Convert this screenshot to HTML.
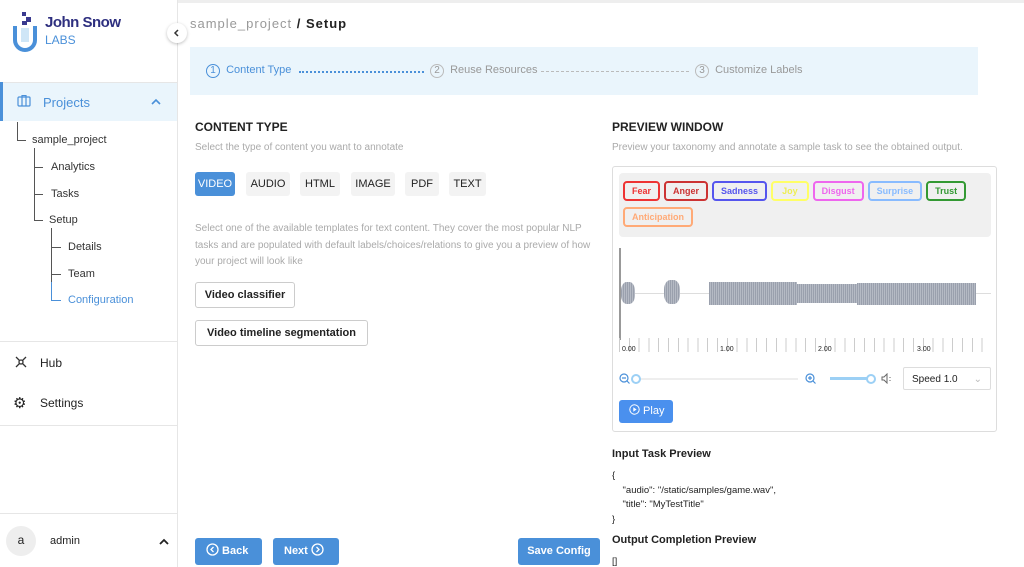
<!DOCTYPE html><html><head><style>
*{margin:0;padding:0;box-sizing:border-box}
body{width:1024px;height:567px;overflow:hidden;font-family:"Liberation Sans",sans-serif;background:#fff;position:relative;color:#222}
.a{position:absolute}
.sb{left:0;top:0;width:178px;height:567px;border-right:1px solid #e6e6e6;background:#fff}
.tree{font-size:11px;color:#333}
.btn{position:absolute;font-size:11px;border-radius:3px}
.tag{display:inline-block;border:2px solid;border-radius:4px;font-size:9px;font-weight:bold;padding:3px 7px;margin:0 4px 6px 0}
.ln{position:absolute;background:#555}
.wv{position:absolute;background:repeating-linear-gradient(90deg,#9aa0ad 0 1px,#b5bac4 1px 2px)}
</style></head><body>
<div class="a" style="left:0;top:0;width:1024px;height:3px;background:#eee"></div>
<div class="a sb">
 <svg class="a" style="left:12px;top:12px" width="30" height="40"><path d="M3 14 v14 a10 10 0 0 0 20 0 v-14" stroke="#4a90d9" stroke-width="4" fill="none"/><rect x="9" y="16" width="8" height="14" fill="#cfe6f7"/><rect x="10" y="0" width="4" height="4" fill="#3a3a8f"/><rect x="14" y="5" width="5" height="5" fill="#3a3a8f"/><rect x="10" y="9" width="5" height="4" fill="#3a3a8f"/></svg>
 <div class="a" style="left:45px;top:14px;font-size:15px;font-weight:bold;color:#2e2f7f;letter-spacing:-0.5px">John Snow</div>
 <div class="a" style="left:45px;top:33px;font-size:12px;color:#4a90d9">LABS</div>
 <div class="a" style="left:0;top:82px;width:177px;height:39px;background:#eaf5fc;border-top:1px solid #e6e6e6"></div>
 <div class="a" style="left:0;top:82px;width:3px;height:39px;background:#4a90d9"></div>
 <svg class="a" style="left:17px;top:95px" width="14" height="12"><rect x="1" y="2" width="12" height="9" rx="1" stroke="#4a90d9" fill="none" stroke-width="1.2"/><path d="M5 2V0.5h4V2M5 2v9M9 2v9" stroke="#4a90d9" fill="none" stroke-width="1.2"/></svg>
 <div class="a" style="left:43px;top:95px;font-size:13px;color:#4a90d9">Projects</div>
 <svg class="a" style="left:151px;top:98px" width="10" height="7"><path d="M1 6L5 2L9 6" stroke="#4a90d9" stroke-width="1.6" fill="none"/></svg>
 <div class="ln" style="left:17px;top:122px;width:1px;height:18px"></div><div class="ln" style="left:17px;top:140px;width:9px;height:1px"></div>
 <div class="a tree" style="left:32px;top:134px">sample_project</div>
 <div class="ln" style="left:34px;top:148px;width:1px;height:72px"></div>
 <div class="a tree" style="left:51px;top:161px">Analytics</div><div class="ln" style="left:34px;top:167px;width:9px;height:1px"></div>
 <div class="a tree" style="left:51px;top:188px">Tasks</div><div class="ln" style="left:34px;top:194px;width:9px;height:1px"></div>
 <div class="a tree" style="left:49px;top:214px">Setup</div><div class="ln" style="left:34px;top:220px;width:9px;height:1px"></div>
 <div class="ln" style="left:51px;top:228px;width:1px;height:54px"></div>
 <div class="ln" style="left:51px;top:282px;width:1px;height:18px;background:#4a90d9"></div>
 <div class="a tree" style="left:68px;top:241px">Details</div><div class="ln" style="left:51px;top:247px;width:10px;height:1px"></div>
 <div class="a tree" style="left:68px;top:268px">Team</div><div class="ln" style="left:51px;top:274px;width:10px;height:1px"></div>
 <div class="a tree" style="left:68px;top:294px;color:#4a90d9">Configuration</div><div class="ln" style="left:51px;top:300px;width:10px;height:1px;background:#4a90d9"></div>
 <div class="a" style="left:0;top:341px;width:177px;border-top:1px solid #e6e6e6"></div>
 <svg class="a" style="left:14px;top:355px" width="14" height="14"><g stroke="#333" stroke-width="1.3" fill="none"><circle cx="7" cy="7" r="2"/><path d="M2 2L5.5 5.5M12 2L8.5 5.5M2 12L5.5 8.5M12 12L8.5 8.5"/></g></svg>
 <div class="a" style="left:40px;top:356px;font-size:12px">Hub</div>
 <div class="a" style="left:13px;top:394px;font-size:15px">&#9881;</div><div class="a" style="left:40px;top:396px;font-size:12px">Settings</div>
 <div class="a" style="left:0;top:425px;width:177px;border-top:1px solid #e6e6e6"></div>
 <div class="a" style="left:0;top:513px;width:177px;border-top:1px solid #e6e6e6"></div>
 <div class="a" style="left:6px;top:526px;width:30px;height:30px;border-radius:50%;background:#eee;text-align:center;line-height:29px;font-size:12px">a</div>
 <div class="a" style="left:50px;top:535px;font-size:11px">admin</div>
 <svg class="a" style="left:159px;top:538px" width="10" height="7"><path d="M1 6L5 2L9 6" stroke="#222" stroke-width="1.8" fill="none"/></svg>
</div>
<div class="a" style="left:167px;top:23px;width:20px;height:20px;border-radius:50%;background:#fff;box-shadow:0 1px 3px rgba(0,0,0,.25)"><svg width="20" height="20"><path d="M11 7L8 10L11 13" stroke="#333" stroke-width="1.5" fill="none"/></svg></div>
<div class="a" style="left:190px;top:16px;font-size:13px;letter-spacing:1px;color:#999">sample_project<b style="color:#222"> / Setup</b></div>
<div class="a" style="left:190px;top:47px;width:788px;height:48px;background:#eaf5fc"></div>
<div class="a" style="left:206px;top:64px;font-size:11px;color:#4a90d9"><span style="display:inline-block;width:14px;height:14px;border:1px solid #4a90d9;border-radius:50%;text-align:center;line-height:12px;font-size:10px">1</span>&nbsp; Content Type</div>
<div class="a" style="left:299px;top:71px;width:125px;border-top:2px dotted #4a90d9"></div>
<div class="a" style="left:430px;top:64px;font-size:11px;color:#999"><span style="display:inline-block;width:14px;height:14px;border:1px solid #bbb;border-radius:50%;text-align:center;line-height:12px;font-size:10px">2</span>&nbsp; Reuse Resources</div>
<div class="a" style="left:541px;top:71px;width:148px;border-top:1px dashed #bbb"></div>
<div class="a" style="left:695px;top:64px;font-size:11px;color:#999"><span style="display:inline-block;width:14px;height:14px;border:1px solid #bbb;border-radius:50%;text-align:center;line-height:12px;font-size:10px">3</span>&nbsp; Customize Labels</div>
<div class="a" style="left:195px;top:120px;font-size:12px;font-weight:bold">CONTENT TYPE</div>
<div class="a" style="left:195px;top:142px;font-size:10px;color:#aaa">Select the type of content you want to annotate</div>
<div class="btn" style="left:195px;top:172px;width:40px;height:24px;background:#4a90d9;color:#fff;text-align:center;line-height:24px">VIDEO</div>
<div class="btn" style="left:246px;top:172px;width:44px;height:24px;background:#f3f3f3;text-align:center;line-height:24px">AUDIO</div>
<div class="btn" style="left:300px;top:172px;width:40px;height:24px;background:#f3f3f3;text-align:center;line-height:24px">HTML</div>
<div class="btn" style="left:351px;top:172px;width:44px;height:24px;background:#f3f3f3;text-align:center;line-height:24px">IMAGE</div>
<div class="btn" style="left:405px;top:172px;width:34px;height:24px;background:#f3f3f3;text-align:center;line-height:24px">PDF</div>
<div class="btn" style="left:449px;top:172px;width:37px;height:24px;background:#f3f3f3;text-align:center;line-height:24px">TEXT</div>
<div class="a" style="left:195px;top:221px;width:410px;font-size:10px;color:#aaa;line-height:16.5px">Select one of the available templates for text content. They cover the most popular NLP tasks and are populated with default labels/choices/relations to give you a preview of how your project will look like</div>
<div class="btn" style="left:195px;top:282px;width:100px;height:26px;border:1px solid #ccc;font-weight:bold;text-align:center;line-height:24px">Video classifier</div>
<div class="btn" style="left:195px;top:320px;width:173px;height:26px;border:1px solid #ccc;font-weight:bold;text-align:center;line-height:24px">Video timeline segmentation</div>
<div class="btn" style="left:195px;top:538px;width:67px;height:27px;background:#4a90d9;color:#fff;font-weight:bold;line-height:27px;padding-left:11px"><svg width="13" height="13" style="vertical-align:-2px"><circle cx="6.5" cy="6.5" r="5.5" stroke="#fff" fill="none" stroke-width="1.3"/><path d="M7.5 4L5 6.5L7.5 9" stroke="#fff" fill="none" stroke-width="1.3"/></svg> Back</div>
<div class="btn" style="left:273px;top:538px;width:66px;height:27px;background:#4a90d9;color:#fff;font-weight:bold;line-height:27px;padding-left:11px">Next <svg width="13" height="13" style="vertical-align:-2px"><circle cx="6.5" cy="6.5" r="5.5" stroke="#fff" fill="none" stroke-width="1.3"/><path d="M5.5 4L8 6.5L5.5 9" stroke="#fff" fill="none" stroke-width="1.3"/></svg></div>
<div class="btn" style="left:518px;top:538px;width:82px;height:27px;background:#4a90d9;color:#fff;font-weight:bold;text-align:center;line-height:27px">Save Config</div>
<div class="a" style="left:612px;top:120px;font-size:12px;font-weight:bold">PREVIEW WINDOW</div>
<div class="a" style="left:612px;top:142px;font-size:10px;color:#aaa">Preview your taxonomy and annotate a sample task to see the obtained output.</div>
<div class="a" style="left:612px;top:166px;width:385px;height:266px;border:1px solid #ddd;border-radius:3px"></div>
<div class="a" style="left:619px;top:173px;width:372px;height:64px;background:#f0f0f0;border-radius:4px;padding:8px 0 0 4px">
<span class="tag" style="border-color:#e33;color:#e33">Fear</span><span class="tag" style="border-color:#c33;color:#c33">Anger</span><span class="tag" style="border-color:#55e;color:#55e">Sadness</span><span class="tag" style="border-color:#ff6;color:#ee5;padding:3px 9px">Joy</span><span class="tag" style="border-color:#e6e;color:#e6e">Disgust</span><span class="tag" style="border-color:#8bf;color:#8bf">Surprise</span><span class="tag" style="border-color:#393;color:#393">Trust</span><br><span class="tag" style="border-color:#fa7;color:#fa7">Anticipation</span></div>
<div class="a" style="left:619px;top:248px;width:2px;height:92px;background:#999"></div>
<div class="a" style="left:621px;top:293px;width:370px;height:1px;background:#ddd"></div>
<div class="wv" style="left:621px;top:282px;width:14px;height:22px;border-radius:40%"></div>
<div class="wv" style="left:664px;top:280px;width:16px;height:24px;border-radius:40%"></div>
<div class="wv" style="left:709px;top:282px;width:88px;height:23px"></div>
<div class="wv" style="left:797px;top:284px;width:60px;height:19px"></div>
<div class="wv" style="left:857px;top:283px;width:119px;height:22px"></div>
<div class="a" style="left:619px;top:338px;width:372px;height:14px;background:repeating-linear-gradient(90deg,#ccc 0 1px,transparent 1px 9.8px)"></div>
<div class="a" style="left:622px;top:346px;font-size:7px">0.00</div><div class="a" style="left:720px;top:346px;font-size:7px">1.00</div><div class="a" style="left:818px;top:346px;font-size:7px">2.00</div><div class="a" style="left:917px;top:346px;font-size:7px">3.00</div>
<svg class="a" style="left:619px;top:373px" width="11" height="11"><circle cx="5" cy="5" r="4" stroke="#4a90d9" fill="none" stroke-width="1.2"/><path d="M3 5h4M8 8l2.5 2.5" stroke="#4a90d9" stroke-width="1.2"/></svg>
<div class="a" style="left:636px;top:378px;width:162px;height:2px;background:#eee"></div>
<div class="a" style="left:631px;top:374px;width:10px;height:10px;border:2px solid #9cd0f5;border-radius:50%;background:#fff"></div>
<svg class="a" style="left:805px;top:373px" width="11" height="11"><circle cx="5" cy="5" r="4" stroke="#4a90d9" fill="none" stroke-width="1.2"/><path d="M3 5h4M5 3v4M8 8l2.5 2.5" stroke="#4a90d9" stroke-width="1.2"/></svg>
<div class="a" style="left:830px;top:377px;width:40px;height:3px;background:#9cd0f5"></div>
<div class="a" style="left:866px;top:374px;width:10px;height:10px;border:2px solid #9cd0f5;border-radius:50%;background:#fff"></div>
<svg class="a" style="left:881px;top:373px" width="12" height="11"><path d="M1 4h2l3-3v9l-3-3H1z" stroke="#666" fill="none"/><path d="M9 4v1M9 7v1" stroke="#666"/></svg>
<div class="a" style="left:903px;top:367px;width:88px;height:23px;border:1px solid #ddd;border-radius:2px;font-size:10px;padding:6px 8px">Speed 1.0<span style="float:right;color:#bbb">&#8964;</span></div>
<div class="btn" style="left:619px;top:400px;width:54px;height:23px;background:#4a90ee;color:#fff;line-height:23px;padding-left:10px"><svg width="11" height="11" style="vertical-align:-1px"><circle cx="5.5" cy="5.5" r="4.7" stroke="#fff" fill="none"/><path d="M4.3 3.3v4.4l3.3-2.2z" fill="#fff"/></svg> Play</div>
<div class="a" style="left:612px;top:448px;font-size:11px;font-weight:bold">Input Task Preview</div>
<div class="a" style="left:612px;top:469px;font-size:9.5px;line-height:14.5px">{<br>&nbsp;&nbsp;&nbsp;&nbsp;"audio": "/static/samples/game.wav",<br>&nbsp;&nbsp;&nbsp;&nbsp;"title": "MyTestTitle"<br>}</div>
<div class="a" style="left:612px;top:534px;font-size:11px;font-weight:bold">Output Completion Preview</div>
<div class="a" style="left:612px;top:556px;font-size:9.5px">[]</div>
</body></html>
